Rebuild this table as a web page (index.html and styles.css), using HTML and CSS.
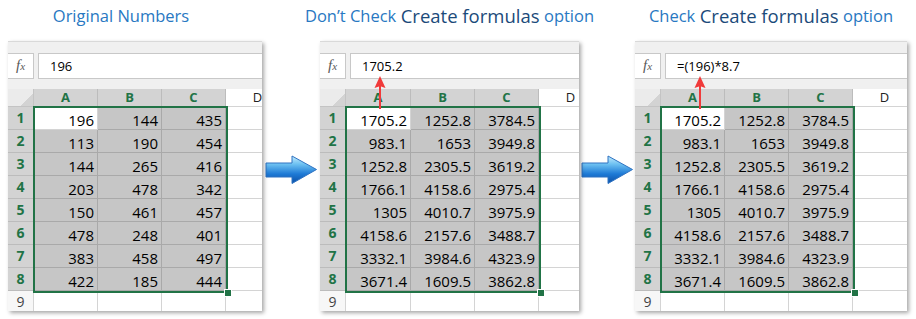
FILE: index.html
```html
<!DOCTYPE html>
<html lang="en">
<head>
<meta charset="utf-8">
<title>Create formulas option</title>
<link rel="stylesheet" href="styles.css">
</head>
<body>
<div class="page">
  <section class="col col-1">
    <h2 class="title title-1"><span class="lt">Original Numbers</span></h2>
    <div class="panel">
      <div class="topbar">
        <div class="fx"><i>f</i><i class="x">x</i></div>
        <div class="formula">196</div>
      </div>
      <div class="sheet">
        <div class="grid">
          <div class="corner"></div><div class="ch">A</div><div class="ch">B</div><div class="ch">C</div><div class="ch off">D</div>
          <div class="rh">1</div><div class="c active">196</div><div class="c s">144</div><div class="c s">435</div><div class="c"></div>
          <div class="rh">2</div><div class="c s">113</div><div class="c s">190</div><div class="c s">454</div><div class="c"></div>
          <div class="rh">3</div><div class="c s">144</div><div class="c s">265</div><div class="c s">416</div><div class="c"></div>
          <div class="rh">4</div><div class="c s">203</div><div class="c s">478</div><div class="c s">342</div><div class="c"></div>
          <div class="rh">5</div><div class="c s">150</div><div class="c s">461</div><div class="c s">457</div><div class="c"></div>
          <div class="rh">6</div><div class="c s">478</div><div class="c s">248</div><div class="c s">401</div><div class="c"></div>
          <div class="rh">7</div><div class="c s">383</div><div class="c s">458</div><div class="c s">497</div><div class="c"></div>
          <div class="rh">8</div><div class="c s">422</div><div class="c s">185</div><div class="c s">444</div><div class="c"></div>
          <div class="rh off">9</div><div class="c"></div><div class="c"></div><div class="c"></div><div class="c"></div>
        </div>
        <div class="sel"><span class="handle"></span></div>
      </div>
    </div>
  </section>

  <div class="gap gap-1">
    <svg class="blue-arrow" width="53" height="30" viewBox="0 0 53 30">
      <defs>
        <linearGradient id="ba1" x1="0" y1="0" x2="0" y2="1">
          <stop offset="0" stop-color="#c4ebfd"/>
          <stop offset="0.3" stop-color="#6cc0f1"/>
          <stop offset="0.65" stop-color="#1e7ad6"/>
          <stop offset="1" stop-color="#0b4fa6"/>
        </linearGradient>
      </defs>
      <path d="M1,8 H27 V1 L51.5,14.5 L27,28.5 V22 H1 Z" fill="url(#ba1)" stroke="#2f73c2" stroke-width="1" stroke-linejoin="round"/>
    </svg>
  </div>

  <section class="col col-2">
    <h2 class="title"><span class="lt">Don’t Check</span>&nbsp;<span class="dk">Create formulas</span>&nbsp;<span class="lt">option</span></h2>
    <div class="panel">
      <div class="topbar">
        <div class="fx"><i>f</i><i class="x">x</i></div>
        <div class="formula">1705.2</div>
      </div>
      <div class="sheet">
        <div class="grid grid-wide">
          <div class="corner"></div><div class="ch">A</div><div class="ch">B</div><div class="ch">C</div><div class="ch off">D</div>
          <div class="rh">1</div><div class="c active">1705.2</div><div class="c s">1252.8</div><div class="c s">3784.5</div><div class="c"></div>
          <div class="rh">2</div><div class="c s">983.1</div><div class="c s">1653</div><div class="c s">3949.8</div><div class="c"></div>
          <div class="rh">3</div><div class="c s">1252.8</div><div class="c s">2305.5</div><div class="c s">3619.2</div><div class="c"></div>
          <div class="rh">4</div><div class="c s">1766.1</div><div class="c s">4158.6</div><div class="c s">2975.4</div><div class="c"></div>
          <div class="rh">5</div><div class="c s">1305</div><div class="c s">4010.7</div><div class="c s">3975.9</div><div class="c"></div>
          <div class="rh">6</div><div class="c s">4158.6</div><div class="c s">2157.6</div><div class="c s">3488.7</div><div class="c"></div>
          <div class="rh">7</div><div class="c s">3332.1</div><div class="c s">3984.6</div><div class="c s">4323.9</div><div class="c"></div>
          <div class="rh">8</div><div class="c s">3671.4</div><div class="c s">1609.5</div><div class="c s">3862.8</div><div class="c"></div>
          <div class="rh off">9</div><div class="c"></div><div class="c"></div><div class="c"></div><div class="c"></div>
        </div>
        <div class="sel sel-wide"><span class="handle"></span></div>
      </div>
      <svg class="red-arrow red-2" width="12" height="33" viewBox="0 0 12 33">
        <path d="M6,0 L11.5,12 L7,10.5 V33 H5 V10.5 L0.5,12 Z" fill="#f03a3a"/>
      </svg>
    </div>
  </section>

  <div class="gap gap-2">
    <svg class="blue-arrow" width="53" height="30" viewBox="0 0 53 30">
      <defs>
        <linearGradient id="ba2" x1="0" y1="0" x2="0" y2="1">
          <stop offset="0" stop-color="#c4ebfd"/>
          <stop offset="0.3" stop-color="#6cc0f1"/>
          <stop offset="0.65" stop-color="#1e7ad6"/>
          <stop offset="1" stop-color="#0b4fa6"/>
        </linearGradient>
      </defs>
      <path d="M1,8 H27 V1 L51.5,14.5 L27,28.5 V22 H1 Z" fill="url(#ba2)" stroke="#2f73c2" stroke-width="1" stroke-linejoin="round"/>
    </svg>
  </div>

  <section class="col col-3">
    <h2 class="title"><span class="lt">Check</span>&nbsp;<span class="dk">Create formulas</span>&nbsp;<span class="lt">option</span></h2>
    <div class="panel">
      <div class="topbar">
        <div class="fx"><i>f</i><i class="x">x</i></div>
        <div class="formula">=(196)*8.7</div>
      </div>
      <div class="sheet">
        <div class="grid">
          <div class="corner"></div><div class="ch">A</div><div class="ch">B</div><div class="ch">C</div><div class="ch off">D</div>
          <div class="rh">1</div><div class="c active">1705.2</div><div class="c s">1252.8</div><div class="c s">3784.5</div><div class="c"></div>
          <div class="rh">2</div><div class="c s">983.1</div><div class="c s">1653</div><div class="c s">3949.8</div><div class="c"></div>
          <div class="rh">3</div><div class="c s">1252.8</div><div class="c s">2305.5</div><div class="c s">3619.2</div><div class="c"></div>
          <div class="rh">4</div><div class="c s">1766.1</div><div class="c s">4158.6</div><div class="c s">2975.4</div><div class="c"></div>
          <div class="rh">5</div><div class="c s">1305</div><div class="c s">4010.7</div><div class="c s">3975.9</div><div class="c"></div>
          <div class="rh">6</div><div class="c s">4158.6</div><div class="c s">2157.6</div><div class="c s">3488.7</div><div class="c"></div>
          <div class="rh">7</div><div class="c s">3332.1</div><div class="c s">3984.6</div><div class="c s">4323.9</div><div class="c"></div>
          <div class="rh">8</div><div class="c s">3671.4</div><div class="c s">1609.5</div><div class="c s">3862.8</div><div class="c"></div>
          <div class="rh off">9</div><div class="c"></div><div class="c"></div><div class="c"></div><div class="c"></div>
        </div>
        <div class="sel"><span class="handle"></span></div>
      </div>
      <svg class="red-arrow red-3" width="12" height="33" viewBox="0 0 12 33">
        <path d="M6,0 L11.5,12 L7,10.5 V33 H5 V10.5 L0.5,12 Z" fill="#f03a3a"/>
      </svg>
    </div>
  </section>
</div>
</body>
</html>
```

FILE: styles.css
```css
* { box-sizing: border-box; }

html, body {
  margin: 0;
  padding: 0;
  background: #ffffff;
}

body {
  font-family: "Open Sans", "Noto Sans", "DejaVu Sans", sans-serif;
  color: #000;
}

.page {
  display: flex;
  align-items: flex-start;
  padding-left: 8px;
  width: 916px;
  height: 319px;
  overflow: hidden;
}

.col { flex: none; }
.col-1 { width: 254px; }
.col-2 { width: 259px; }
.col-3 { width: 272px; }

.gap { flex: none; padding-top: 155px; }
.gap-1 { width: 58px; padding-left: 3px; }
.gap-2 { width: 56px; padding-left: 2px; }
.blue-arrow { display: block; }

/* titles */
.title {
  margin: 0;
  height: 41px;
  padding-top: 4px;
  display: flex;
  justify-content: center;
  white-space: nowrap;
  font-weight: normal;
  line-height: 23px;
  font-size: 17px;
}
.title-1 { padding-right: 28px; }
.title .lt { color: #2878c2; font-size: 16.5px; }
.title .dk { color: #1b4a7a; font-size: 18.5px; }

/* spreadsheet panel */
.panel {
  position: relative;
  height: 270px;
  background: #ffffff;
  border-top: 1px solid #d9d9d9;
  overflow: hidden;
  box-shadow: 2px 2px 4px rgba(0, 0, 0, 0.35);
}

.topbar {
  display: flex;
  background: #f0f0f0;
  padding: 11px 0 10px 0;
}

.fx {
  flex: none;
  width: 26px;
  height: 26px;
  margin-right: 4px;
  background: #ffffff;
  border: 1px solid #c8c8c8;
  border-left: none;
  font-family: "Liberation Serif", "DejaVu Serif", serif;
  color: #595959;
  font-size: 15px;
  line-height: 22px;
  text-align: center;
}
.fx .x { font-size: 11px; }

.formula {
  flex: 1;
  height: 26px;
  margin-right: -3px;
  background: #ffffff;
  border: 1px solid #c8c8c8;
  padding-left: 11px;
  font-size: 13px;
  line-height: 24px;
  color: #000;
}

.sheet { position: relative; }

.grid {
  display: grid;
  grid-template-columns: 26px 64px 64px 64px 64px;
  grid-template-rows: 18px repeat(9, 23px);
}
.grid-wide { grid-template-columns: 26px 65px 64px 64px 64px; }

.corner {
  background: linear-gradient(135deg, #ebebeb 0, #ebebeb 70%, #d3d3d3 70%) ;
  border-right: 1px solid #c4c4c4;
  border-bottom: 1px solid #c4c4c4;
}

.ch {
  background: #d3d3d3;
  border-right: 1px solid #bcbcbc;
  border-bottom: 1px solid #bcbcbc;
  color: #217346;
  font-weight: bold;
  font-size: 13px;
  line-height: 17px;
  text-align: center;
}
.ch.off {
  background: #ffffff;
  color: #222;
  font-weight: normal;
  border-bottom-color: #d4d4d4;
  border-right-color: #d4d4d4;
}

.rh {
  background: #d3d3d3;
  border-right: 1px solid #bcbcbc;
  border-bottom: 1px solid #bcbcbc;
  color: #217346;
  font-weight: bold;
  font-size: 14px;
  line-height: 22px;
  text-align: center;
}
.rh.off {
  background: #f7f7f7;
  color: #444;
  font-weight: normal;
  border-right-color: #d4d4d4;
  border-bottom-color: #d4d4d4;
}

.c {
  border-right: 1px solid #d4d4d4;
  border-bottom: 1px solid #d4d4d4;
  text-align: right;
  padding: 2px 3px 0 0;
  font-size: 15px;
  line-height: 22px;
  white-space: nowrap;
}
.c.s {
  background: #c6c6c6;
  border-right-color: #a9a9a9;
  border-bottom-color: #a9a9a9;
}
.c.active { background: #ffffff; }

/* selection outline overlays the grid */
.sel {
  position: absolute;
  left: 25px;
  top: 17px;
  width: 195px;
  height: 187px;
  border: 2px solid #217346;
}
.sel-wide { width: 196px; }

.handle {
  position: absolute;
  right: -6px;
  bottom: -6px;
  width: 8px;
  height: 8px;
  background: #217346;
  border: 1px solid #ffffff;
}

.red-arrow {
  position: absolute;
  top: 34px;
}
.red-2 { left: 54px; }
.red-3 { left: 59px; }
```
